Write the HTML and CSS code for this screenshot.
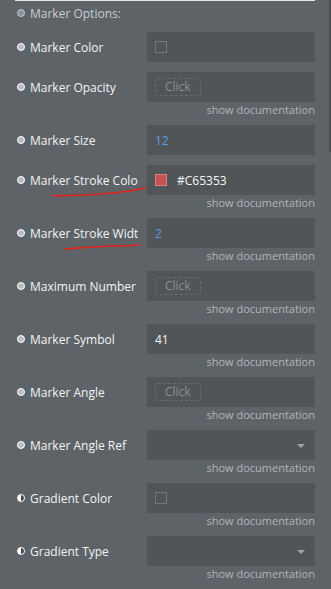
FILE: index.html
```html
<!DOCTYPE html>
<html lang="en">
<head>
    <meta charset="UTF-8">
    <meta name="viewport" content="width=device-width, initial-scale=1.0">
    <title>Marker Options</title>
    <link rel="stylesheet" href="styles.css">
</head>
<body>

    <div class="panel">
        <div class="section-title">
            <span class="dot dot-dim"></span>Marker Options:
        </div>

        <!-- Marker Color -->
        <div class="field">
            <div class="label"><span class="dot"></span><span class="name">Marker Color</span></div>
            <div class="input"><span class="swatch"></span></div>
        </div>

        <!-- Marker Opacity -->
        <div class="field">
            <div class="label"><span class="dot"></span><span class="name">Marker Opacity</span></div>
            <div class="input"><span class="click-btn">Click</span></div>
        </div>
        <div class="doc">show documentation</div>

        <!-- Marker Size -->
        <div class="field">
            <div class="label"><span class="dot"></span><span class="name">Marker Size</span></div>
            <div class="input"><span class="value num">12</span></div>
        </div>

        <!-- Marker Stroke Color -->
        <div class="field">
            <div class="label"><span class="dot"></span><span class="name">Marker Stroke Colo</span></div>
            <div class="input"><span class="swatch swatch-red"></span><span class="value hex">#C65353</span></div>
        </div>
        <div class="doc">show documentation</div>

        <!-- Marker Stroke Width -->
        <div class="field">
            <div class="label"><span class="dot"></span><span class="name">Marker Stroke Widt</span></div>
            <div class="input"><span class="value num">2</span></div>
        </div>
        <div class="doc">show documentation</div>

        <!-- Maximum Number -->
        <div class="field">
            <div class="label"><span class="dot"></span><span class="name">Maximum Number</span></div>
            <div class="input"><span class="click-btn">Click</span></div>
        </div>
        <div class="doc">show documentation</div>

        <!-- Marker Symbol -->
        <div class="field">
            <div class="label"><span class="dot"></span><span class="name">Marker Symbol</span></div>
            <div class="input"><span class="value">41</span></div>
        </div>
        <div class="doc">show documentation</div>

        <!-- Marker Angle -->
        <div class="field">
            <div class="label"><span class="dot"></span><span class="name">Marker Angle</span></div>
            <div class="input"><span class="click-btn">Click</span></div>
        </div>
        <div class="doc">show documentation</div>

        <!-- Marker Angle Ref -->
        <div class="field">
            <div class="label"><span class="dot"></span><span class="name">Marker Angle Ref</span></div>
            <div class="input select"><span class="caret"></span></div>
        </div>
        <div class="doc">show documentation</div>

        <!-- Gradient Color -->
        <div class="field">
            <div class="label"><span class="dot dot-half"></span><span class="name">Gradient Color</span></div>
            <div class="input"><span class="swatch"></span></div>
        </div>
        <div class="doc">show documentation</div>

        <!-- Gradient Type -->
        <div class="field">
            <div class="label"><span class="dot dot-half"></span><span class="name">Gradient Type</span></div>
            <div class="input select"><span class="caret"></span></div>
        </div>
        <div class="doc">show documentation</div>
    </div>

    <div class="scroll-thumb"></div>

    <!-- hand drawn marks -->
    <svg class="marks" xmlns="http://www.w3.org/2000/svg" width="331" height="589" viewBox="0 0 331 589">
        <path d="M52 195.5 C 70 196, 85 195, 100 194 C 118 193, 132 191, 145 188" fill="none" stroke="#e0231c" stroke-width="1.6" stroke-linecap="round"/>
        <path d="M65 249 C 80 248, 95 246.5, 110 246 C 122 245.7, 132 245.5, 140 245" fill="none" stroke="#e0231c" stroke-width="1.6" stroke-linecap="round"/>
    </svg>

</body>
</html>
```

FILE: styles.css
```css
body {
    margin: 0;
    background-color: #5e6367;
    font-family: "Open Sans", "Noto Sans", sans-serif;
    color: #f2f3f4;
    overflow: hidden;
}
.panel {
    width: 300px;
    margin-left: 15px;
    border-top: 1px solid #e6e7e8;
}
.section-title {
    display: flex;
    align-items: center;
    height: 24px;
    margin-bottom: 7px;
    font-size: 12px;
    color: #c9ccd0;
}
.dot {
    display: inline-block;
    width: 6px;
    height: 6px;
    margin-left: 2px;
    margin-right: 5px;
    border: 1px solid #ffffff;
    border-radius: 50%;
    background-color: #b9bcbf;
    flex: none;
}
.dot-dim {
    border-color: #c4c7ca;
    background-color: #8e9296;
}
.dot-half {
    background: linear-gradient(90deg, #ffffff 50%, #3e4245 50%);
}
.field {
    display: flex;
    align-items: center;
    height: 30px;
    margin-bottom: 10px;
}
.field + .doc {
    margin-top: -10px;
}
.label {
    display: flex;
    align-items: center;
    width: 132px;
    font-size: 12px;
    white-space: nowrap;
    overflow: hidden;
}
.label .name {
    overflow: hidden;
    width: 108px;
}
.input {
    display: flex;
    align-items: center;
    width: 168px;
    height: 30px;
    padding-left: 8px;
    box-sizing: border-box;
    background-color: #515558;
    font-size: 12px;
    position: relative;
}
.swatch {
    width: 10px;
    height: 10px;
    border: 1px solid #73787c;
}
.swatch-red {
    background-color: #c65353;
    border-color: #d78282;
}
.value {
    color: #f4f5f6;
}
.value.num {
    color: #5b9be6;
}
.value.hex {
    margin-left: 10px;
}
.click-btn {
    height: 16px;
    line-height: 16px;
    padding: 0 9px;
    border: 1px dashed #676c70;
    border-radius: 3px;
    color: #8b8f93;
}
.caret {
    position: absolute;
    right: 10px;
    top: 14px;
    width: 0;
    height: 0;
    border-left: 4px solid transparent;
    border-right: 4px solid transparent;
    border-top: 4px solid #9fa3a7;
}
.doc {
    height: 16px;
    line-height: 16px;
    margin-bottom: 7px;
    text-align: right;
    font-size: 11px;
    color: #b1b5b9;
}
.scroll-thumb {
    position: fixed;
    top: 0;
    right: 0;
    width: 2px;
    height: 152px;
    background-color: #4d5155;
}
.marks {
    position: absolute;
    top: 0;
    left: 0;
    pointer-events: none;
}
```
